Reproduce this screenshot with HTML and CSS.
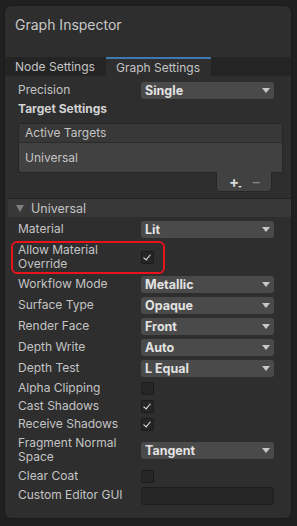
FILE: index.html
```html
<!DOCTYPE html>
<html lang="en">
<head>
    <meta charset="UTF-8">
    <meta name="viewport" content="width=device-width, initial-scale=1.0">
    <title>Graph Inspector</title>
    <link rel="stylesheet" href="styles.css">
</head>
<body>
    <div class="panel">
        <div class="title">Graph Inspector</div>
        <div class="tabs">
            <div class="tab">Node Settings</div>
            <div class="tab active">Graph Settings</div>
        </div>

        <div class="content">
            <div class="row">
                <div class="label">Precision</div>
                <div class="dropdown">Single</div>
            </div>
            <div class="section-label">Target Settings</div>

            <div class="list">
                <div class="list-header">Active Targets</div>
                <div class="list-item">Universal</div>
            </div>
            <div class="list-footer">
                <span class="plus">+<span class="caret"></span></span>
                <span class="minus">&minus;</span>
            </div>
        </div>

        <div class="foldout"><span class="fold-arrow"></span>Universal</div>

        <div class="content">
            <div class="row">
                <div class="label">Material</div>
                <div class="dropdown">Lit</div>
            </div>
            <div class="row tall">
                <div class="label">Allow Material<br>Override</div>
                <div class="check on"></div>
                <div class="highlight"></div>
            </div>
            <div class="row">
                <div class="label">Workflow Mode</div>
                <div class="dropdown">Metallic</div>
            </div>
            <div class="row">
                <div class="label">Surface Type</div>
                <div class="dropdown">Opaque</div>
            </div>
            <div class="row">
                <div class="label">Render Face</div>
                <div class="dropdown">Front</div>
            </div>
            <div class="row">
                <div class="label">Depth Write</div>
                <div class="dropdown">Auto</div>
            </div>
            <div class="row">
                <div class="label">Depth Test</div>
                <div class="dropdown">L Equal</div>
            </div>
            <div class="row small">
                <div class="label">Alpha Clipping</div>
                <div class="check"></div>
            </div>
            <div class="row small">
                <div class="label">Cast Shadows</div>
                <div class="check on"></div>
            </div>
            <div class="row small">
                <div class="label">Receive Shadows</div>
                <div class="check on"></div>
            </div>
            <div class="row tall">
                <div class="label">Fragment Normal<br>Space</div>
                <div class="dropdown">Tangent</div>
            </div>
            <div class="row small">
                <div class="label">Clear Coat</div>
                <div class="check"></div>
            </div>
            <div class="row">
                <div class="label">Custom Editor GUI</div>
                <div class="textfield"></div>
            </div>
        </div>
    </div>
</body>
</html>
```

FILE: styles.css
```css
body {
    margin: 0;
    padding: 6px 6px 8px 5px;
    background-color: #202020;
    font-family: 'Inter', 'Liberation Sans', sans-serif;
    font-size: 12px;
    color: #c4c4c4;
}
.panel {
    background-color: #2e2e2e;
    border-radius: 6px;
    height: 512px;
    overflow: hidden;
    box-shadow: 0 0 0 1px #1b1b1b;
}
.title {
    font-size: 14px;
    height: 51px;
    padding: 10px 0 0 10px;
    box-sizing: border-box;
    color: #c8c8c8;
}
.tabs {
    display: flex;
    height: 19px;
    background-color: #242424;
}
.tab {
    flex: none;
    box-sizing: border-box;
    width: 101px;
    padding-left: 10px;
    font-size: 12px;
    line-height: 19px;
    white-space: nowrap;
    color: #c4c4c4;
}
.tab.active {
    width: 105px;
    background-color: #2e2e2e;
    border-top: 2px solid #3f78b0;
    line-height: 17px;
}
.content {
    padding: 6px 17px 0 13px;
}
.row {
    position: relative;
    display: flex;
    align-items: center;
    height: 17px;
    margin-bottom: 4px;
}
.row.tall {
    height: 30px;
}
.row.small {
    height: 14px;
}
.label {
    width: 123px;
    flex: none;
    line-height: 14.5px;
}
.dropdown {
    position: relative;
    flex: 1;
    height: 17px;
    line-height: 17px;
    background-color: #4a4a4a;
    border-radius: 3px;
    padding-left: 4px;
    font-weight: bold;
    font-size: 12.5px;
    color: #e2e2e2;
}
.dropdown::after {
    content: "";
    position: absolute;
    right: 4px;
    top: 6px;
    border-left: 4px solid transparent;
    border-right: 4px solid transparent;
    border-top: 5px solid #c8c8c8;
}
.textfield {
    flex: 1;
    height: 18px;
    box-sizing: border-box;
    background-color: #262626;
    border: 1px solid #1d1d1d;
    border-radius: 3px;
}
.check {
    position: relative;
    width: 13px;
    height: 13px;
    box-sizing: border-box;
    background-color: #262626;
    border: 1px solid #1c1c1c;
    border-radius: 2px;
}
.check.on::after {
    content: "";
    position: absolute;
    left: 3px;
    top: 1px;
    width: 3px;
    height: 6px;
    border-right: 1.5px solid #e8e8e8;
    border-bottom: 1.5px solid #e8e8e8;
    transform: rotate(40deg);
}
.highlight {
    position: absolute;
    left: -7px;
    top: -1px;
    width: 154px;
    height: 33px;
    box-sizing: border-box;
    border: 2px solid #e8141c;
    border-radius: 6px;
}
.section-label {
    font-weight: bold;
    height: 16px;
    line-height: 16px;
    margin-top: -2px;
    color: #d2d2d2;
}
.list {
    margin: 6px -9px 0 0;
    border: 1px solid #262626;
    border-radius: 3px 3px 0 3px;
    background-color: #414141;
}
.list-header {
    height: 18px;
    line-height: 18px;
    padding-left: 6px;
    background-color: #383838;
    border-bottom: 1px solid #2a2a2a;
}
.list-item {
    height: 29px;
    line-height: 29px;
    padding-left: 6px;
}
.list-footer {
    display: flex;
    gap: 12px;
    align-items: center;
    width: 56px;
    height: 20px;
    box-sizing: border-box;
    margin: -1px 2px 0 auto;
    padding-left: 12px;
    background-color: #414141;
    border: 1px solid #262626;
    border-top: none;
    border-radius: 0 0 3px 3px;
    font-size: 15px;
    color: #d8d8d8;
}
.plus {
    position: relative;
    font-weight: bold;
}
.caret {
    position: absolute;
    right: -3px;
    bottom: 3px;
    border-left: 2px solid transparent;
    border-right: 2px solid transparent;
    border-top: 2px solid #d8d8d8;
}
.minus {
    color: #8a8a8a;
}
.foldout {
    display: flex;
    align-items: center;
    margin: 6px 0 0 3px;
    height: 18px;
    background-color: #383838;
    border-top: 1px solid #242424;
    padding-left: 8px;
    font-size: 12.5px;
}
.fold-arrow {
    width: 0;
    height: 0;
    border-left: 4px solid transparent;
    border-right: 4px solid transparent;
    border-top: 7px solid #7e7e7e;
    margin-right: 7px;
}
.foldout + .content {
    padding-top: 4px;
}
```
